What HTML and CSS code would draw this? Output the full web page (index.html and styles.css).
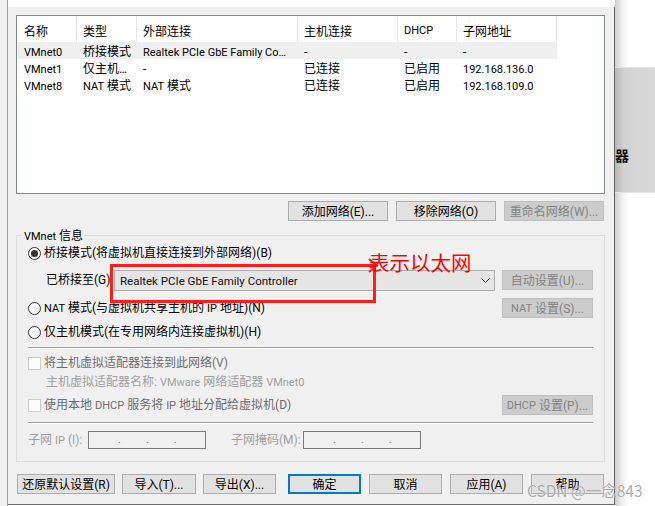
FILE: index.html
```html
<!DOCTYPE html>
<html lang="zh-CN">
<head>
<meta charset="utf-8">
<title>虚拟网络编辑器</title>
<link rel="stylesheet" href="styles.css">
</head>
<body>
<div class="screen">
  <div class="strip"></div>
  <div class="dialog">
    <div class="list">
      <div class="list-head">
        <div class="hc first">名称</div>
        <div class="hc">类型</div>
        <div class="hc">外部连接</div>
        <div class="hc">主机连接</div>
        <div class="hc"><span class="en">DHCP</span></div>
        <div class="hc">子网地址</div>
      </div>
      <div class="list-row sel">
        <div class="c first"><span class="en">VMnet0</span></div>
        <div class="c">桥接模式</div>
        <div class="c"><span class="en">Realtek PCIe GbE Family Co…</span></div>
        <div class="c">-</div>
        <div class="c">-</div>
        <div class="c">-</div>
      </div>
      <div class="list-row">
        <div class="c first"><span class="en">VMnet1</span></div>
        <div class="c">仅主机…</div>
        <div class="c">-</div>
        <div class="c">已连接</div>
        <div class="c">已启用</div>
        <div class="c"><span class="en">192.168.136.0</span></div>
      </div>
      <div class="list-row">
        <div class="c first"><span class="en">VMnet8</span></div>
        <div class="c"><span class="en">NAT</span> 模式</div>
        <div class="c"><span class="en">NAT</span> 模式</div>
        <div class="c">已连接</div>
        <div class="c">已启用</div>
        <div class="c"><span class="en">192.168.109.0</span></div>
      </div>
    </div>

    <div class="btn-row top">
      <div class="btn w100">添加网络(E)...</div>
      <div class="btn w100">移除网络(O)</div>
      <div class="btn w100 dis">重命名网络(W)...</div>
    </div>

    <div class="group">
      <div class="legend"><span class="en">VMnet</span> 信息</div>
      <div class="row r-a"><span class="radio on"></span><span>桥接模式(将虚拟机直接连接到外部网络)(B)</span></div>
      <div class="row r-b">
        <span class="lbl">已桥接至(G)</span>
        <div class="combo">
          <span class="en">Realtek PCIe GbE Family Controller</span>
          <svg class="chev" width="9" height="5" viewBox="0 0 9 5"><polyline points="0.5,0.5 4.5,4.5 8.5,0.5" fill="none" stroke="#333" stroke-width="1"/></svg>
        </div>
        <div class="btn w91 dis">自动设置(U)...</div>
      </div>
      <div class="row r-c"><span class="radio"></span><span><span class="en">NAT</span> 模式(与虚拟机共享主机的 <span class="en">IP</span> 地址)(N)</span><div class="btn w91 dis push"><span class="en">NAT</span>&nbsp;设置(S)...</div></div>
      <div class="row r-d"><span class="radio"></span><span>仅主机模式(在专用网络内连接虚拟机)(H)</span></div>
      <div class="sep s1"></div>
      <div class="row r-e"><span class="check"></span><span class="dim">将主机虚拟适配器连接到此网络(V)</span></div>
      <div class="row r-f"><span class="faint">主机虚拟适配器名称: <span class="en">VMware</span> 网络适配器 <span class="en">VMnet0</span></span></div>
      <div class="row r-g"><span class="check"></span><span class="dim">使用本地 <span class="en">DHCP</span> 服务将 <span class="en">IP</span> 地址分配给虚拟机(D)</span><div class="btn w91 dis push"><span class="en">DHCP</span>&nbsp;设置(P)...</div></div>
      <div class="sep s2"></div>
      <div class="row r-h">
        <span class="faint l1">子网 <span class="en">IP</span> (I):</span>
        <div class="ip"><span>.</span><span>.</span><span>.</span></div>
        <span class="faint l2">子网掩码(M):</span>
        <div class="ip"><span>.</span><span>.</span><span>.</span></div>
      </div>
    </div>

    <div class="btn-row bottom">
      <div class="btn b-reset">还原默认设置(R)</div>
      <div class="btn b-imp">导入(T)...</div>
      <div class="btn b-exp">导出(X)...</div>
      <div class="btn b-ok def">确定</div>
      <div class="btn b-n">取消</div>
      <div class="btn b-n">应用(A)</div>
      <div class="btn b-n">帮助</div>
    </div>

    <div class="anno">
      <svg width="280" height="50" viewBox="0 0 280 50">
        <rect x="3.5" y="8.5" width="263" height="36" fill="none" stroke="#ff1c1c" stroke-width="3"/>
        <polyline points="261,2 269,8.5 261,15" fill="none" stroke="#ff1c1c" stroke-width="2"/>
      </svg>
      <span class="anno-text">表示以太网</span>
    </div>
  </div>
  <div class="side">
    <div class="side-panel"><span class="qi">器</span></div>
  </div>
  <div class="watermark">CSDN @一念843</div>
</div>
</body>
</html>
```

FILE: styles.css
```css
* { box-sizing: border-box; }

html, body {
  margin: 0;
  padding: 0;
  background: #ffffff;
}

body {
  font-family: Roboto, "Noto Sans CJK SC", sans-serif;
  font-size: 12px;
  color: #000;
}

.en { font-size: 11px; }

.screen {
  position: relative;
  display: flex;
  width: 655px;
  height: 506px;
  overflow: hidden;
}

.strip {
  width: 8px;
  height: 506px;
  background: #f0f0f0;
  border-right: 1px solid #a0a0a0;
}

.dialog {
  position: relative;
  width: 607px;
  height: 498px;
  margin-top: 7px;
  background: #f0f0f0;
  border-right: 1px solid #646464;
  border-bottom: 1px solid #6d6d6d;
  padding: 8px 9px 0 8px;
  display: flex;
  flex-direction: column;
}

/* list view */
.list {
  height: 179px;
  border: 1px solid #828790;
  background: #fff;
}

.list-head {
  display: grid;
  grid-template-columns: 60px 60px 161px 100px 59px 100px;
  height: 26px;
}

.hc {
  border-right: 1px solid #e5e5e5;
  padding: 3px 0 0 6px;
  display: flex;
  align-items: center;
  white-space: nowrap;
}

.hc.first, .c.first { padding-left: 7px; }

.list-row {
  display: grid;
  grid-template-columns: 60px 60px 161px 100px 59px 100px;
  width: 540px;
  height: 17px;
}

.list-row.sel { background: #efefef; }

.c {
  height: 17px;
  padding: 3px 0 0 6px;
  line-height: 14px;
  white-space: nowrap;
  overflow: hidden;
}

/* buttons */
.btn {
  display: flex;
  align-items: center;
  justify-content: center;
  height: 20px;
  padding-top: 1px;
  border: 1px solid #adadad;
  background: #e1e1e1;
  white-space: nowrap;
  line-height: 16px;
  flex-shrink: 0;
}

.btn.dis {
  background: #cccccc;
  border-color: #bfbfbf;
  color: #838383;
}

.btn.def { border: 2px solid #0078d7; }

.w100 { width: 100px; }
.w91 { width: 91px; }

.btn-row { display: flex; }

.btn-row.top {
  margin-top: 7px;
  justify-content: flex-end;
  gap: 8px;
  padding-right: 1px;
}

.btn-row.bottom { margin-top: 12px; }

.b-reset { width: 98px; margin-left: 1px; }
.b-imp { width: 74px; margin-left: 7px; }
.b-exp { width: 73px; margin-left: 7px; }
.b-ok { width: 73px; margin-left: 12px; }
.b-n { width: 73px; margin-left: 8px; }

/* group box */
.group {
  margin-top: 14px;
  border: 1px solid #dcdcdc;
  padding: 0 11px 11px 11px;
  display: flex;
  flex-direction: column;
}

.legend {
  align-self: flex-start;
  margin: -9px 0 0 -6px;
  padding: 2px 2px 0 2px;
  height: 16px;
  line-height: 14px;
  background: #f0f0f0;
}

.row {
  display: flex;
  align-items: center;
  white-space: nowrap;
  height: 20px;
  line-height: 16px;
}

.r-b { margin-top: 7px; height: 21px; align-items: flex-start; }
.r-c { margin-top: 7px; }
.r-d { margin-top: 4px; }
.r-e { margin-top: 4px; }
.r-f { height: 18px; padding-left: 18px; }
.r-g { margin-top: 4px; }
.r-h { margin-top: 6px; }

.sep {
  border-top: 1px solid #a0a0a0;
  border-bottom: 1px solid #ffffff;
}
.s1 { margin-top: 5px; }
.s2 { margin-top: 7px; }

.push { margin-left: auto; }

.radio {
  width: 13px;
  height: 13px;
  border: 1px solid #333;
  border-radius: 50%;
  background: #fff;
  margin-right: 3px;
  display: flex;
  align-items: center;
  justify-content: center;
  flex-shrink: 0;
}

.radio.on::after {
  content: "";
  width: 7px;
  height: 7px;
  border-radius: 50%;
  background: #333;
}

.check {
  width: 13px;
  height: 13px;
  border: 1px solid #cccccc;
  background: #fcfcfc;
  margin-right: 3px;
  flex-shrink: 0;
}

.dim { color: #6d6d6d; }
.faint { color: #a0a0a0; }

.lbl {
  width: 86px;
  padding-left: 18px;
  height: 21px;
  line-height: 21px;
}

.combo {
  width: 381px;
  height: 21px;
  border: 1px solid #adadad;
  background: #e5e5e5;
  display: flex;
  align-items: center;
  justify-content: space-between;
  padding: 0 4px 0 5px;
  margin-right: 7px;
}

.combo .en { font-size: 11.5px; color: #111; }

.chev { display: block; }

.l1 { width: 60px; }
.l2 { width: 72px; margin-left: 25px; }

.ip {
  width: 118px;
  height: 18px;
  border: 1px solid #7a7a7a;
  background: #f0f0f0;
  display: flex;
  align-items: center;
  padding-left: 29px;
  gap: 25px;
  color: #808080;
  font-size: 11px;
  line-height: 10px;
}

/* annotation overlay */
.anno {
  position: absolute;
  left: 100px;
  top: 250px;
  width: 400px;
  height: 60px;
}

.anno svg {
  position: absolute;
  left: 0;
  top: 0;
}

.anno-text {
  position: absolute;
  left: 261px;
  top: -7px;
  font-family: "Noto Sans CJK SC", sans-serif;
  font-size: 20.5px;
  line-height: 24px;
  color: #ff0000;
  white-space: nowrap;
}

/* right side background window */
.side {
  flex: 1;
  height: 506px;
  background: linear-gradient(to right, #cdcdcd 0, #efefef 7px, #ffffff 14px);
}

.side-panel {
  margin-top: 67px;
  height: 126px;
  background: linear-gradient(to right, #b8b8b8 0, #d3d3d3 10px, #d9d9d9 100%);
  border-top: 1px solid #e2e2e2;
  border-bottom: 1px solid #e6e6e6;
  padding-top: 80px;
}

.qi {
  display: block;
  font-family: "Noto Sans CJK SC", sans-serif;
  font-size: 14px;
  line-height: 14px;
  font-weight: bold;
  color: #111;
}

.watermark {
  position: absolute;
  left: 527px;
  top: 480px;
  font-family: "Noto Sans CJK SC", sans-serif;
  font-size: 15.5px;
  line-height: 20px;
  color: rgba(150, 150, 150, 0.8);
  text-shadow: 0 0 1px #ffffff;
  white-space: nowrap;
}
```
